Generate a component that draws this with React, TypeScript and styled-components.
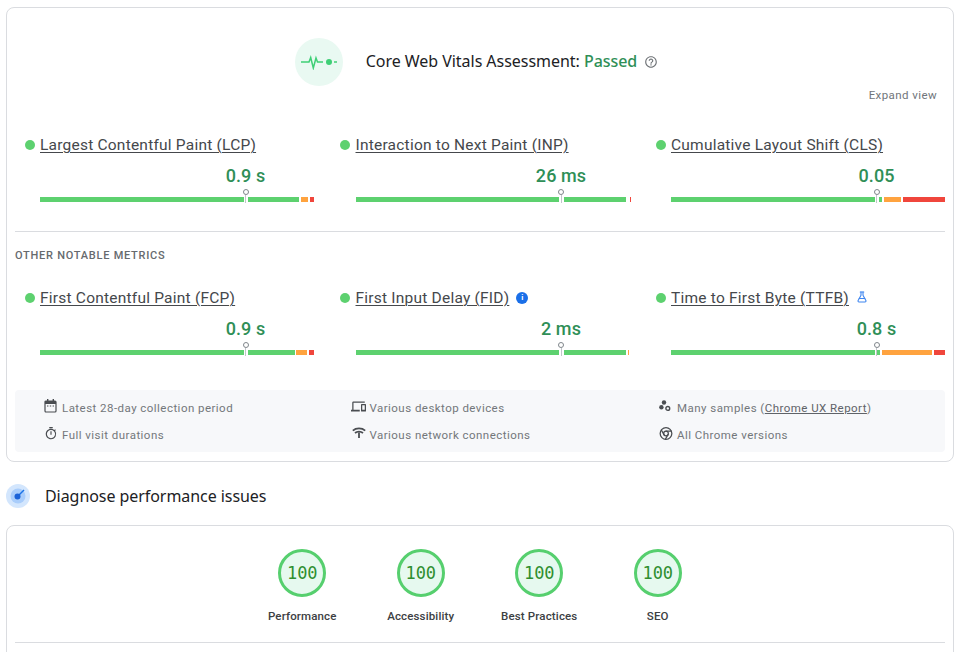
import React from "react";
import styled, { createGlobalStyle } from "styled-components";
import { MdHelpOutline, MdOutlineTimer, MdOutlineDevices } from "react-icons/md";
import { Chrome, FlaskConical } from "lucide-react";

const Global = createGlobalStyle`
  html, body { margin: 0; padding: 0; background: #fff; overflow: hidden; }
  body { font-family: Roboto, "Liberation Sans", sans-serif; color: #3c4043; }
`;

const Page = styled.div`
  width: 960px;
  height: 652px;
  overflow: hidden;
  padding: 7px 6px 0;
  box-sizing: border-box;
`;

const Card = styled.section`
  border: 1px solid #dadce0;
  border-radius: 8px;
  padding: 0 8px 8px;
  box-sizing: border-box;
  height: 455px;
`;

const Header = styled.div`
  display: flex;
  align-items: center;
  justify-content: center;
  height: 48px;
  margin-top: 30px;
  padding-right: 7px;
`;

const PulseCircle = styled.div`
  width: 48px;
  height: 48px;
  border-radius: 50%;
  background: #e9f9f2;
  display: flex;
  align-items: center;
  justify-content: center;
  margin-right: 23px;
`;

const Title = styled.h1`
  margin: 0 0 2px;
  font: 400 16px "Noto Sans", Roboto, sans-serif;
  letter-spacing: -0.04px;
  color: #202124;
`;

const Passed = styled.span`
  color: #2f8f57;
  font-weight: 500;
`;

const HelpIcon = styled(MdHelpOutline)`
  margin-left: 7px;
  color: #6f7377;
  font-size: 14px;
`;

const ExpandRow = styled.div`
  text-align: right;
  font-size: 11.5px;
  letter-spacing: 0.42px;
  color: #70757a;
  margin-top: 3px;
  padding-right: 8px;
  line-height: 13px;
`;

const MetricGrid = styled.div<{ $top: number }>`
  display: grid;
  grid-template-columns: 315.5px 315.5px 1fr;
  margin-top: ${(p) => p.$top}px;
  padding-left: 9.5px;
`;

const Metric = styled.div`
  display: flex;
  flex-direction: column;
`;

const LabelRow = styled.div`
  display: flex;
  align-items: center;
  height: 20px;
`;

const Dot = styled.span`
  width: 10px;
  height: 10px;
  border-radius: 50%;
  background: #5dd16f;
  margin-right: 5.5px;
  flex: none;
`;

const MetricLink = styled.a`
  font-size: 15.5px;
  letter-spacing: 0.22px;
  color: #45484c;
  text-decoration: underline;
  text-underline-offset: 2px;
  text-decoration-thickness: 1px;
  white-space: nowrap;
`;

const InfoBadge = styled.span`
  width: 12px;
  height: 12px;
  border-radius: 50%;
  background: #1a6fe8;
  color: #fff;
  font: 700 8px/12px Roboto, sans-serif;
  text-align: center;
  margin-left: 7px;
`;

const Flask = styled(FlaskConical)`
  color: #3f86f0;
  margin-left: 7px;
  margin-top: -2px;
`;

const Value = styled.div<{ $x: number }>`
  font-size: 18px;
  font-weight: 500;
  line-height: 22px;
  color: #2f8f57;
  letter-spacing: 0.1px;
  margin-top: 10px;
  margin-left: ${(p) => p.$x}px;
  transform: translateX(-50%);
  width: max-content;
`;

const BarTrack = styled.div`
  position: relative;
  display: flex;
  height: 5px;
  margin: 10px 0 0 15.5px;
  width: 275px;
`;

const Seg = styled.span<{ $c: string; $l: number; $w: number }>`
  height: 5px;
  flex: none;
  background: ${(p) => p.$c};
  width: ${(p) => p.$w}px;
  margin-left: ${(p) => p.$l}px;
`;

const Marker = styled.span<{ $x: number }>`
  position: absolute;
  left: ${(p) => p.$x}px;
  top: -8px;
  width: 6px;
  height: 14px;
  margin-left: -3px;
  display: flex;
  flex-direction: column;
  align-items: center;
`;

const MarkerHead = styled.span`
  width: 6px;
  height: 6px;
  box-sizing: border-box;
  border: 1.2px solid #80868b;
  border-radius: 50%;
  background: #fff;
  flex: none;
`;

const MarkerStem = styled.span`
  width: 1px;
  height: 8px;
  background: #9aa0a6;
  opacity: 0.6;
`;

const Divider = styled.hr`
  border: 0;
  border-top: 1px solid #dadce0;
  margin: 0;
`;

const FirstDivider = styled(Divider)`
  margin-top: 29px;
`;

const SectionLabel = styled.div`
  font-size: 11px;
  font-weight: 500;
  letter-spacing: 0.75px;
  color: #666a6e;
  line-height: 13px;
  margin-top: 17px;
`;

const Footer = styled.div`
  margin-top: 35px;
  height: 62px;
  background: #f7f8fa;
  border-radius: 4px;
  display: grid;
  grid-template-columns: 307.5px 307.5px 1fr;
  grid-template-rows: 27px 27px;
  align-content: center;
  padding-left: 29px;
  padding-top: 1px;
  box-sizing: border-box;
`;

const FooterItem = styled.div`
  display: flex;
  align-items: center;
  font-size: 11.5px;
  letter-spacing: 0.46px;
  color: #73777b;
  white-space: nowrap;
`;

const FooterIcon = styled.span`
  width: 14px;
  height: 14px;
  margin-right: 4px;
  margin-top: -4px;
  color: #4a4d51;
  display: flex;
  align-items: center;
  justify-content: flex-start;
  flex: none;
`;

const DeviceIcon = styled(MdOutlineDevices)`
  margin-left: -1px;
`;

const FooterLink = styled.a`
  text-decoration: underline;
  color: #5f6368;
`;

const DiagnoseRow = styled.div`
  display: flex;
  align-items: center;
  height: 24px;
  margin-top: 22px;
`;

const DiagnoseTitle = styled.h2`
  margin: 0 0 0 15px;
  font: 400 16px "Noto Sans", Roboto, sans-serif;
  letter-spacing: -0.06px;
  color: #202124;
`;

const ScoreCard = styled.section`
  border: 1px solid #dadce0;
  border-radius: 8px;
  margin-top: 17px;
  padding: 23px 8px 0;
  height: 200px;
  box-sizing: border-box;
`;

const Scores = styled.div`
  display: flex;
  justify-content: center;
`;

const Score = styled.div`
  width: 118.5px;
  display: flex;
  flex-direction: column;
  align-items: center;
`;

const Gauge = styled.div`
  width: 48px;
  height: 48px;
  border-radius: 50%;
  box-sizing: border-box;
  border: 3.5px solid #56cf6e;
  background: #e6f9ef;
  color: #2f8f2f;
  font: 400 17px/43px "DejaVu Sans Mono", "Liberation Mono", monospace;
  text-align: center;
`;

const ScoreLabel = styled.div`
  margin-top: 12px;
  font-size: 11.5px;
  font-weight: 500;
  letter-spacing: 0.15px;
  line-height: 14px;
  color: #3c4043;
  white-space: nowrap;
`;

const ScoreDivider = styled(Divider)`
  margin-top: 19px;
`;

const G = "#5dd16f";
const O = "#ffa33f";
const R = "#f0463c";

type Part = [string, number, number];
type Data = {
  label: string;
  value: string;
  marker: number;
  parts: Part[];
  extra?: React.ReactNode;
};

const row1: Data[] = [
  { label: "Largest Contentful Paint (LCP)", value: "0.9 s", marker: 205.5, parts: [[G, 0, 203.5], [G, 208, 259], [O, 260.5, 267.5], [R, 269.5, 274]] },
  { label: "Interaction to Next Paint (INP)", value: "26 ms", marker: 205.5, parts: [[G, 0, 203], [G, 208, 270], [R, 274, 275]] },
  { label: "Cumulative Layout Shift (CLS)", value: "0.05", marker: 205.5, parts: [[G, 0, 204], [G, 208, 211], [O, 213, 229.5], [R, 231.5, 274]] },
];

const row2: Data[] = [
  { label: "First Contentful Paint (FCP)", value: "0.9 s", marker: 205.5, parts: [[G, 0, 203.5], [G, 208, 254.5], [O, 256, 267], [R, 269, 274]] },
  { label: "First Input Delay (FID)", value: "2 ms", marker: 205.5, parts: [[G, 0, 203], [G, 208, 270], [O, 272, 273]], extra: <InfoBadge>i</InfoBadge> },
  { label: "Time to First Byte (TTFB)", value: "0.8 s", marker: 205.5, parts: [[G, 0, 204], [G, 206, 209], [O, 211, 261], [R, 263, 274]], extra: <Flask size={12} strokeWidth={2.2} /> },
];

const MetricCell = ({ d }: { d: Data }) => (
  <Metric>
    <LabelRow>
      <Dot />
      <MetricLink>{d.label}</MetricLink>
      {d.extra}
    </LabelRow>
    <Value $x={15.5 + d.marker}>{d.value}</Value>
    <BarTrack>
      {d.parts.map((p, i) => (
        <Seg key={i} $c={p[0]} $w={p[2] - p[1]} $l={i === 0 ? p[1] : p[1] - d.parts[i - 1][2]} />
      ))}
      <Marker $x={d.marker}>
        <MarkerHead />
        <MarkerStem />
      </Marker>
    </BarTrack>
  </Metric>
);

const CalendarIcon = () => (
  <svg width="13" height="14" viewBox="0 0 13 14" fill="none">
    <rect x="3" y="0" width="1.4" height="2.5" fill="currentColor" />
    <rect x="8.6" y="0" width="1.4" height="2.5" fill="currentColor" />
    <rect x="1" y="2" width="11" height="11" rx="1" stroke="currentColor" strokeWidth="1.2" />
    <rect x="1" y="2" width="11" height="3" fill="currentColor" />
    <path d="M3 7h1.4M5.8 7h1.4M8.6 7h1.4" stroke="currentColor" strokeWidth="1.2" />
  </svg>
);

const WifiIcon = () => (
  <svg width="14" height="12" viewBox="0 0 14 12" fill="none" stroke="currentColor" strokeWidth="1.8">
    <path d="M0.8 3.6C4.2 0.6 9.8 0.6 13.2 3.6" />
    <path d="M3 6C5.2 4.2 8.8 4.2 11 6" />
    <path d="M7 5.5V11" />
  </svg>
);

const SamplesIcon = () => (
  <svg width="12" height="12" viewBox="0 0 12 12" fill="currentColor">
    <circle cx="5" cy="2.5" r="2.2" />
    <circle cx="2.4" cy="7.2" r="2.2" />
    <circle cx="8.8" cy="8.4" r="1.9" fill="none" stroke="currentColor" strokeWidth="1.4" />
  </svg>
);

export default function App() {
  return (
    <Page>
      <Global />
      <Card>
        <Header>
          <PulseCircle>
            <svg width="36" height="16" viewBox="0 0 36 16" fill="none">
              <path d="M0 8H8L9.7 3.5 12.3 14 15 4 16.5 8H22" stroke="#3fcf76" strokeWidth="1.5" />
              <circle cx="28" cy="8" r="3" fill="#3fcf76" />
              <path d="M33 8H36" stroke="#3fcf76" strokeWidth="1.5" />
            </svg>
          </PulseCircle>
          <Title>
            Core Web Vitals Assessment: <Passed>Passed</Passed>
          </Title>
          <HelpIcon />
        </Header>
        <ExpandRow>Expand view</ExpandRow>
        <MetricGrid $top={33}>
          {row1.map((d) => (
            <MetricCell key={d.label} d={d} />
          ))}
        </MetricGrid>
        <FirstDivider />
        <SectionLabel>OTHER NOTABLE METRICS</SectionLabel>
        <MetricGrid $top={26}>
          {row2.map((d) => (
            <MetricCell key={d.label} d={d} />
          ))}
        </MetricGrid>
        <Footer>
          <FooterItem><FooterIcon><CalendarIcon /></FooterIcon>Latest 28-day collection period</FooterItem>
          <FooterItem><FooterIcon><DeviceIcon size={15} /></FooterIcon>Various desktop devices</FooterItem>
          <FooterItem><FooterIcon><SamplesIcon /></FooterIcon>Many samples (<FooterLink>Chrome UX Report</FooterLink>)</FooterItem>
          <FooterItem><FooterIcon><MdOutlineTimer size={15} /></FooterIcon>Full visit durations</FooterItem>
          <FooterItem><FooterIcon><WifiIcon /></FooterIcon>Various network connections</FooterItem>
          <FooterItem><FooterIcon><Chrome size={15} strokeWidth={2.2} /></FooterIcon>All Chrome versions</FooterItem>
        </Footer>
      </Card>
      <DiagnoseRow>
        <svg width="24" height="24" viewBox="0 0 24 24">
          <circle cx="12" cy="12" r="12" fill="#d3e6fd" />
          <circle cx="12" cy="12" r="7.5" fill="#a9cdfb" />
          <path d="M12 12L18 6" stroke="#1a73e8" strokeWidth="1.4" />
          <circle cx="11.5" cy="12.5" r="3" fill="#1a62d8" />
        </svg>
        <DiagnoseTitle>Diagnose performance issues</DiagnoseTitle>
      </DiagnoseRow>
      <ScoreCard>
        <Scores>
          {["Performance", "Accessibility", "Best Practices", "SEO"].map((s) => (
            <Score key={s}>
              <Gauge>100</Gauge>
              <ScoreLabel>{s}</ScoreLabel>
            </Score>
          ))}
        </Scores>
        <ScoreDivider />
      </ScoreCard>
    </Page>
  );
}
